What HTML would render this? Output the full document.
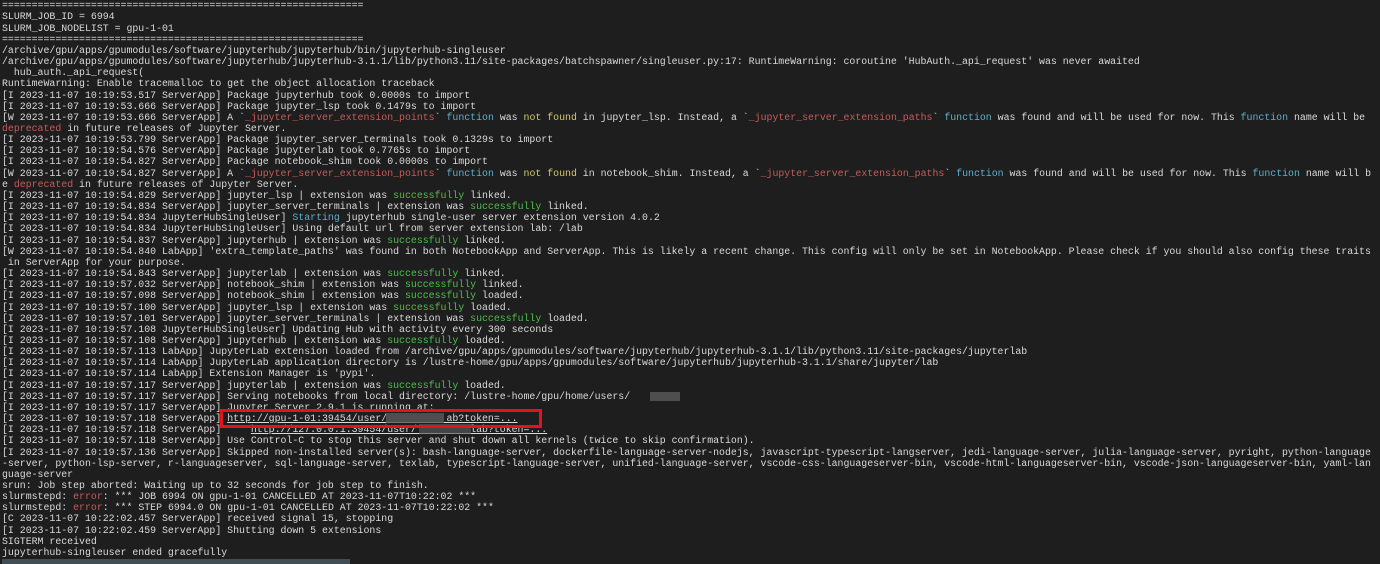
<!DOCTYPE html>
<html><head><meta charset="utf-8">
<style>
html,body{margin:0;padding:0;background:#1e1e1e;width:1380px;height:564px;overflow:hidden;}
pre{margin:0;padding:0.3px 0 0 2px;font-family:"Liberation Mono","DejaVu Sans Mono",monospace;font-size:9.9px;line-height:11.15px;color:#dadada;white-space:pre;}
.r{color:#c75a5a}.b{color:#5ab0cf}.y{color:#d4c96a}.g{color:#4bbf4b}
.u{text-decoration:underline}
.box{position:absolute;left:220px;top:409px;width:316px;height:13px;border:3px solid #e0141b;}
.bl{position:absolute;background:#5a5a5a;opacity:.8}
</style></head><body>
<pre>=============================================================
SLURM_JOB_ID = 6994
SLURM_JOB_NODELIST = gpu-1-01
=============================================================
/archive/gpu/apps/gpumodules/software/jupyterhub/jupyterhub/bin/jupyterhub-singleuser
/archive/gpu/apps/gpumodules/software/jupyterhub/jupyterhub-3.1.1/lib/python3.11/site-packages/batchspawner/singleuser.py:17: RuntimeWarning: coroutine 'HubAuth._api_request' was never awaited
  hub_auth._api_request(
RuntimeWarning: Enable tracemalloc to get the object allocation traceback
[I 2023-11-07 10:19:53.517 ServerApp] Package jupyterhub took 0.0000s to import
[I 2023-11-07 10:19:53.666 ServerApp] Package jupyter_lsp took 0.1479s to import
[W 2023-11-07 10:19:53.666 ServerApp] A `<span class="r">_jupyter_server_extension_points</span>` <span class="b">function</span> was <span class="y">not found</span> in jupyter_lsp. Instead, a `<span class="r">_jupyter_server_extension_paths</span>` <span class="b">function</span> was found and will be used for now. This <span class="b">function</span> name will be
<span class="r">deprecated</span> in future releases of Jupyter Server.
[I 2023-11-07 10:19:53.799 ServerApp] Package jupyter_server_terminals took 0.1329s to import
[I 2023-11-07 10:19:54.576 ServerApp] Package jupyterlab took 0.7765s to import
[I 2023-11-07 10:19:54.827 ServerApp] Package notebook_shim took 0.0000s to import
[W 2023-11-07 10:19:54.827 ServerApp] A `<span class="r">_jupyter_server_extension_points</span>` <span class="b">function</span> was <span class="y">not found</span> in notebook_shim. Instead, a `<span class="r">_jupyter_server_extension_paths</span>` <span class="b">function</span> was found and will be used for now. This <span class="b">function</span> name will b
e <span class="r">deprecated</span> in future releases of Jupyter Server.
[I 2023-11-07 10:19:54.829 ServerApp] jupyter_lsp | extension was <span class="g">successfully</span> linked.
[I 2023-11-07 10:19:54.834 ServerApp] jupyter_server_terminals | extension was <span class="g">successfully</span> linked.
[I 2023-11-07 10:19:54.834 JupyterHubSingleUser] <span class="b">Starting</span> jupyterhub single-user server extension version 4.0.2
[I 2023-11-07 10:19:54.834 JupyterHubSingleUser] Using default url from server extension lab: /lab
[I 2023-11-07 10:19:54.837 ServerApp] jupyterhub | extension was <span class="g">successfully</span> linked.
[W 2023-11-07 10:19:54.840 LabApp] 'extra_template_paths' was found in both NotebookApp and ServerApp. This is likely a recent change. This config will only be set in NotebookApp. Please check if you should also config these traits
 in ServerApp for your purpose.
[I 2023-11-07 10:19:54.843 ServerApp] jupyterlab | extension was <span class="g">successfully</span> linked.
[I 2023-11-07 10:19:57.032 ServerApp] notebook_shim | extension was <span class="g">successfully</span> linked.
[I 2023-11-07 10:19:57.098 ServerApp] notebook_shim | extension was <span class="g">successfully</span> loaded.
[I 2023-11-07 10:19:57.100 ServerApp] jupyter_lsp | extension was <span class="g">successfully</span> loaded.
[I 2023-11-07 10:19:57.101 ServerApp] jupyter_server_terminals | extension was <span class="g">successfully</span> loaded.
[I 2023-11-07 10:19:57.108 JupyterHubSingleUser] Updating Hub with activity every 300 seconds
[I 2023-11-07 10:19:57.108 ServerApp] jupyterhub | extension was <span class="g">successfully</span> loaded.
[I 2023-11-07 10:19:57.113 LabApp] JupyterLab extension loaded from /archive/gpu/apps/gpumodules/software/jupyterhub/jupyterhub-3.1.1/lib/python3.11/site-packages/jupyterlab
[I 2023-11-07 10:19:57.114 LabApp] JupyterLab application directory is /lustre-home/gpu/apps/gpumodules/software/jupyterhub/jupyterhub-3.1.1/share/jupyter/lab
[I 2023-11-07 10:19:57.114 LabApp] Extension Manager is 'pypi'.
[I 2023-11-07 10:19:57.117 ServerApp] jupyterlab | extension was <span class="g">successfully</span> loaded.
[I 2023-11-07 10:19:57.117 ServerApp] Serving notebooks from local directory: /lustre-home/gpu/home/users/
[I 2023-11-07 10:19:57.117 ServerApp] Jupyter Server 2.9.1 is running at:
[I 2023-11-07 10:19:57.118 ServerApp] <span class="u">http://gpu-1-01:39454/user/          ab?token=...</span>
[I 2023-11-07 10:19:57.118 ServerApp]     <span class="u">http://127.0.0.1:39454/user/         lab?token=...</span>
[I 2023-11-07 10:19:57.118 ServerApp] Use Control-C to stop this server and shut down all kernels (twice to skip confirmation).
[I 2023-11-07 10:19:57.136 ServerApp] Skipped non-installed server(s): bash-language-server, dockerfile-language-server-nodejs, javascript-typescript-langserver, jedi-language-server, julia-language-server, pyright, python-language
-server, python-lsp-server, r-languageserver, sql-language-server, texlab, typescript-language-server, unified-language-server, vscode-css-languageserver-bin, vscode-html-languageserver-bin, vscode-json-languageserver-bin, yaml-lan
guage-server
srun: Job step aborted: Waiting up to 32 seconds for job step to finish.
slurmstepd: <span class="r">error</span>: *** JOB 6994 ON gpu-1-01 CANCELLED AT 2023-11-07T10:22:02 ***
slurmstepd: <span class="r">error</span>: *** STEP 6994.0 ON gpu-1-01 CANCELLED AT 2023-11-07T10:22:02 ***
[C 2023-11-07 10:22:02.457 ServerApp] received signal 15, stopping
[I 2023-11-07 10:22:02.459 ServerApp] Shutting down 5 extensions
SIGTERM received
jupyterhub-singleuser ended gracefully
</pre>
<div class="bl" style="left:650px;top:392px;width:30px;height:9px"></div>
<div class="bl" style="left:386px;top:413px;width:58px;height:10px"></div>
<div class="bl" style="left:419px;top:424px;width:52px;height:10px;opacity:.65"></div>
<div class="bl" style="left:2px;top:559px;width:348px;height:5px;background:#4a5a60"></div>
<div class="box"></div>
</body></html>
